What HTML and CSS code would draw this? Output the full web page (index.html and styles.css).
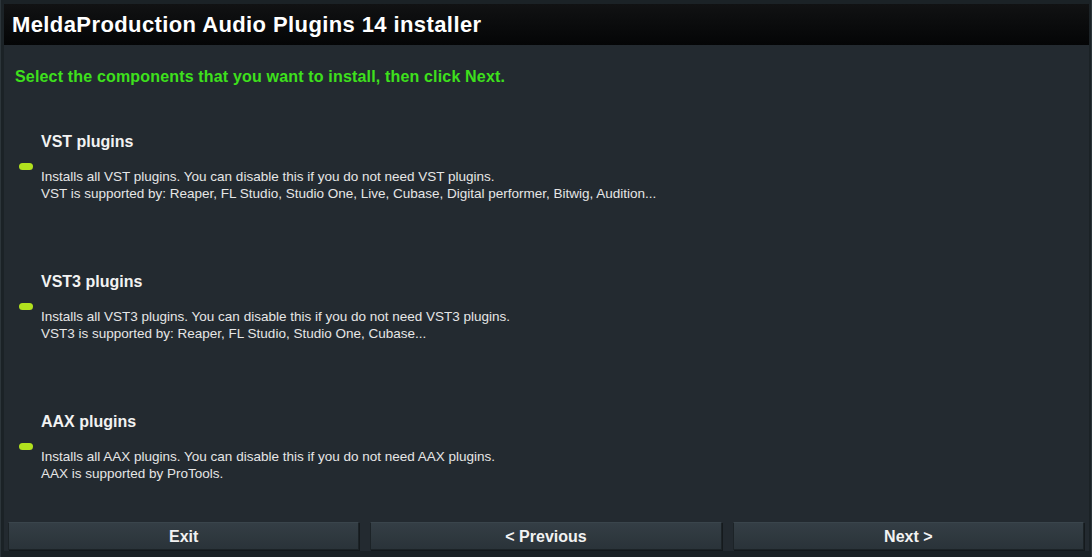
FILE: index.html
```html
<!DOCTYPE html>
<html>
<head>
<meta charset="utf-8">
<link rel="stylesheet" href="styles.css">
</head>
<body>
<div class="window">
  <div class="header"><h1 class="title">MeldaProduction Audio Plugins 14 installer</h1></div>
  <div class="content">
    <p class="prompt">Select the components that you want to install, then click Next.</p>
    <div class="items">
      <div class="item">
        <div class="item-title">VST plugins</div>
        <div class="item-row">
          <span class="pill"></span>
          <div class="desc">Installs all VST plugins. You can disable this if you do not need VST plugins.<br>VST is supported by: Reaper, FL Studio, Studio One, Live, Cubase, Digital performer, Bitwig, Audition...</div>
        </div>
      </div>
      <div class="item">
        <div class="item-title">VST3 plugins</div>
        <div class="item-row">
          <span class="pill"></span>
          <div class="desc">Installs all VST3 plugins. You can disable this if you do not need VST3 plugins.<br>VST3 is supported by: Reaper, FL Studio, Studio One, Cubase...</div>
        </div>
      </div>
      <div class="item">
        <div class="item-title">AAX plugins</div>
        <div class="item-row">
          <span class="pill"></span>
          <div class="desc">Installs all AAX plugins. You can disable this if you do not need AAX plugins.<br>AAX is supported by ProTools.</div>
        </div>
      </div>
    </div>
    <div class="buttons">
      <button class="btn">Exit</button>
      <button class="btn">&lt; Previous</button>
      <button class="btn">Next &gt;</button>
    </div>
  </div>
</div>
</body>
</html>
```
FILE: styles.css
```css
* { box-sizing: border-box; }
html, body { margin: 0; padding: 0; }
body {
  width: 1092px;
  height: 557px;
  background: #161c1f;
  font-family: "Liberation Sans", Arial, sans-serif;
  overflow: hidden;
}
.window {
  width: 1092px;
  height: 557px;
  padding: 4px 2px 6px 3px;
  background: #1b2226;
  border-left: 1px solid #2c353a;
  border-right: 1px solid #2c353a;
  display: flex;
  flex-direction: column;
}
.header {
  height: 41px;
  background: linear-gradient(#111213, #040506);
  display: flex;
  align-items: center;
  padding-left: 8px;
  flex: none;
}
.title {
  margin: 0;
  color: #ffffff;
  font-size: 22px;
  font-weight: bold;
  letter-spacing: 0.4px;
}
.content {
  flex: 1;
  min-height: 0;
  background: #232a30;
  display: flex;
  flex-direction: column;
  padding: 0 5px 1px 4px;
}
.prompt {
  margin: 24px 0 0 7px;
  color: #3ee01c;
  font-size: 16px;
  font-weight: bold;
  line-height: 16px;
  letter-spacing: 0.17px;
}
.items {
  flex: 1;
  min-height: 0;
  padding-top: 48px;
}
.item + .item {
  margin-top: 71px;
}
.item-title {
  margin-left: 33px;
  color: #f2f2f2;
  font-size: 16px;
  font-weight: bold;
  line-height: 18px;
}
.item-row {
  display: flex;
  align-items: flex-start;
  margin-top: 12px;
}
.pill {
  width: 14px;
  height: 7px;
  border-radius: 4px;
  background: #b2e21e;
  margin: 0 8px 0 11px;
  flex: none;
}
.desc {
  color: #e6e6e6;
  font-size: 13.5px;
  line-height: 17px;
  margin-top: 5px;
}
.buttons {
  display: flex;
  gap: 11px;
  flex: none;
}
.btn {
  flex: 1;
  height: 28px;
  border: 1px solid #1c2327;
  border-top-color: #3a454c;
  background: linear-gradient(#343e45, #2a3339);
  color: #f2f2f2;
  font-family: "Liberation Sans", Arial, sans-serif;
  font-size: 16px;
  font-weight: bold;
  padding: 1px 0 0;
  box-shadow: 1px 1px 0 #151a1d;
}
```
